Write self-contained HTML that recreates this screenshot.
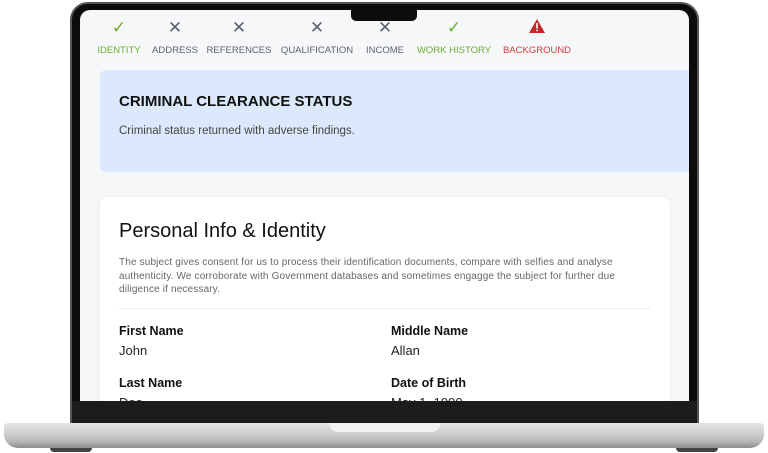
<!DOCTYPE html>
<html><head><style>
*{margin:0;padding:0;box-sizing:border-box}
body{width:768px;height:453px;background:#fff;position:relative;overflow:hidden;font-family:"Liberation Sans",sans-serif}
.frame{position:absolute;left:70px;top:2px;width:629px;height:422px;background:#0c0c0c;border-radius:18px 18px 0 0;border:2px solid #555}
.screen{position:absolute;left:80px;top:10px;width:609px;height:391px;background:#f6f7f9;border-radius:10px 10px 0 0;overflow:hidden}
.chin{position:absolute;left:72px;top:401px;width:625px;height:22px;background:#1c1c1c}
.notch{position:absolute;left:351px;top:10px;width:66px;height:11px;background:#0c0c0c;border-radius:0 0 5px 5px}
.base{position:absolute;left:4px;top:423px;width:760px;height:25px;background:linear-gradient(#e4e5e6,#cfd0d1 40%,#b5b6b7 75%,#8c8d8e);border-radius:4px 4px 14px 14px}
.lip{position:absolute;left:330px;top:423px;width:110px;height:9px;background:#f2f2f2;border-radius:0 0 8px 8px}
.foot{position:absolute;top:448px;width:42px;height:4px;background:#444;border-radius:0 0 4px 4px}
.tab{position:absolute;top:35px;font-size:9.5px;color:#5c6270;text-align:center;transform:translateX(-50%);white-space:nowrap}
.ic{position:absolute;top:9px;font-size:17px;transform:translateX(-50%);line-height:18px}
.g{color:#6cae2d}.r{color:#d43c3c}.gr{color:#5c6270}
.blue{position:absolute;left:20px;top:60px;width:600px;height:102px;background:#dce8fb;border-radius:6px}
.card{position:absolute;left:20px;top:187px;width:570px;height:230px;background:#fff;border-radius:8px;box-shadow:0 0 6px rgba(0,0,0,.05)}
.lbl{position:absolute;font-weight:bold;font-size:12.5px;color:#111}
.val{position:absolute;font-size:13px;color:#222}
</style></head><body>
<div class="frame"></div>
<div class="screen">
 <div class="ic g" style="left:39px">✓</div><div class="tab g" style="left:39px">IDENTITY</div>
 <div class="ic gr" style="left:95px">✕</div><div class="tab" style="left:95px">ADDRESS</div>
 <div class="ic gr" style="left:159px">✕</div><div class="tab" style="left:159px">REFERENCES</div>
 <div class="ic gr" style="left:237px">✕</div><div class="tab" style="left:237px">QUALIFICATION</div>
 <div class="ic gr" style="left:305px">✕</div><div class="tab" style="left:305px">INCOME</div>
 <div class="ic g" style="left:374px">✓</div><div class="tab g" style="left:374px">WORK HISTORY</div>
 <svg style="position:absolute;left:448px;top:8px" width="18" height="16" viewBox="0 0 18 16"><path d="M9 1L17 15H1Z" fill="#c62828"/><rect x="8.2" y="5" width="1.6" height="5.5" fill="#fff"/><rect x="8.2" y="11.6" width="1.6" height="1.6" fill="#fff"/></svg>
 <div class="tab r" style="left:457px">BACKGROUND</div>
 <div class="blue">
  <div style="position:absolute;left:19px;top:23px;font-weight:bold;font-size:15px;color:#111">CRIMINAL CLEARANCE STATUS</div>
  <div style="position:absolute;left:19px;top:55px;font-size:11.5px;color:#444">Criminal status returned with adverse findings.</div>
 </div>
 <div class="card">
  <div style="position:absolute;left:19px;top:23px;font-size:20px;color:#111">Personal Info &amp; Identity</div>
  <div style="position:absolute;left:19px;top:59px;width:530px;font-size:10px;line-height:13.5px;letter-spacing:0.15px;color:#666">The subject gives consent for us to process their identification documents, compare with selfies and analyse authenticity. We corroborate with Government databases and sometimes engagge the subject for further due diligence if necessary.</div>
  <div style="position:absolute;left:19px;top:111px;width:532px;height:1px;background:#eceef0"></div>
  <div class="lbl" style="left:19px;top:127px">First Name</div><div class="val" style="left:19px;top:146px">John</div>
  <div class="lbl" style="left:291px;top:127px">Middle Name</div><div class="val" style="left:291px;top:146px">Allan</div>
  <div class="lbl" style="left:19px;top:179px">Last Name</div><div class="val" style="left:19px;top:198px">Doe</div>
  <div class="lbl" style="left:291px;top:179px">Date of Birth</div><div class="val" style="left:291px;top:198px">May 1, 1990</div>
 </div>
</div>
<div class="notch"></div>
<div class="chin"></div>
<div class="base"></div>
<div class="lip"></div>
<div class="foot" style="left:50px"></div><div class="foot" style="left:676px"></div>
</body></html>
